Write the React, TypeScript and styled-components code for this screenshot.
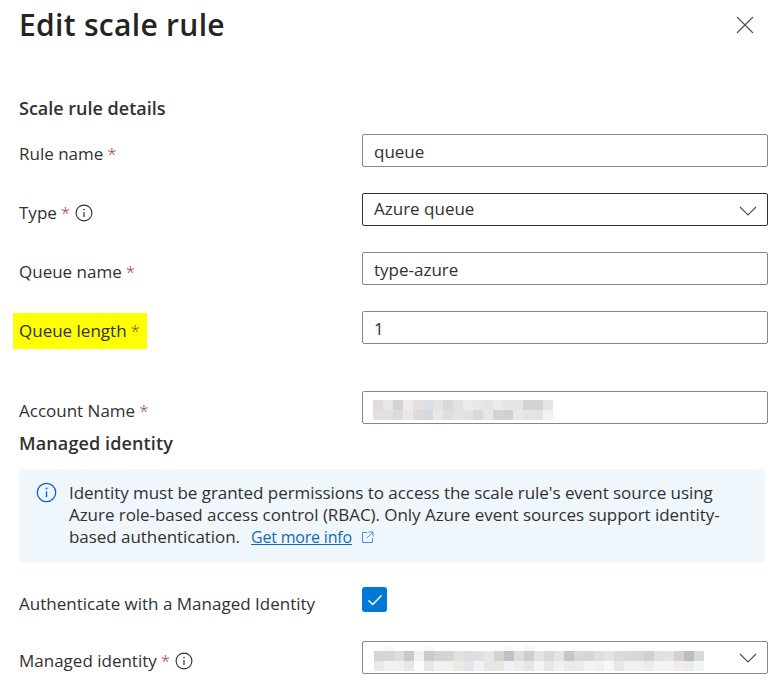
import React from "react";
import styled, { createGlobalStyle } from "styled-components";

const Global = createGlobalStyle`
  html, body { margin: 0; padding: 0; background: #fff; }
  body { font-family: "Open Sans", "Noto Sans", sans-serif; color: #323130; overflow: hidden; }
`;

const Page = styled.div`
  width: 780px;
  height: 689px;
  box-sizing: border-box;
  overflow: hidden;
  padding: 0 12px 0 19px;
  display: flex;
  flex-direction: column;
`;
const Header = styled.header`
  display: flex;
  justify-content: space-between;
  align-items: center;
  height: 50px;
`;
const Title = styled.h1`
  margin: 0;
  font-size: 30px;
  line-height: 50px;
  font-weight: 600;
  letter-spacing: 0.3px;
  color: #252423;
`;
const Close = styled.button`
  border: 0;
  background: none;
  padding: 0;
  width: 18px;
  height: 18px;
  margin-right: 14px;
  display: flex;
  color: #505050;
  svg { width: 18px; height: 18px; }
`;
const SectionTitle = styled.h2<{ $top: number; $bottom: number; $tight?: boolean }>`
  margin: ${(p) => p.$top}px 0 ${(p) => p.$bottom}px;
  font-size: 18px;
  line-height: 22px;
  font-weight: 600;
  letter-spacing: ${(p) => (p.$tight ? "0.12px" : "0")};
  color: #323130;
`;
const Row = styled.div<{ $bottom: number; $height?: number }>`
  display: grid;
  grid-template-columns: 343px 406px;
  grid-template-rows: ${(p) => p.$height ?? 33}px;
  align-items: center;
  margin-bottom: ${(p) => p.$bottom}px;
`;
const Label = styled.label<{ $drop?: number }>`
  display: flex;
  align-items: center;
  padding-top: ${(p) => p.$drop ?? 6}px;
  font-size: 17px;
  line-height: 22px;
  color: #323130;
`;
const Highlight = styled.span`
  display: inline-block;
  background: #ffff00;
  margin: -7px 0 -7px -6px;
  padding: 7px 6px;
  width: 134px;
  box-sizing: border-box;
  white-space: nowrap;
  color: #323130;
`;
const Req = styled.span`
  color: #a4262c;
  margin-left: 4px;
  font-weight: 300;
`;
const Tip = styled.span`
  display: inline-flex;
  margin-left: 5px;
  color: #323130;
  svg { width: 18px; height: 18px; }
`;
const Chevron = styled.svg`
  width: 18px;
  height: 10px;
  color: #505050;
  flex: none;
`;
const Field = styled.div<{ $active?: boolean }>`
  height: 33px;
  box-sizing: border-box;
  border: 1px solid ${(p) => (p.$active ? "#323130" : "#8a8886")};
  border-radius: 2px;
  padding: ${(p) => (p.$active ? "0 10px 2px 11px" : "1px 10px 0 11px")};
  display: flex;
  align-items: center;
  justify-content: space-between;
  font-size: 17px;
  color: #323130;
  background: #fff;
  ${Chevron} { margin-top: ${(p) => (p.$active ? "4px" : "0")}; }
`;
const Banner = styled.div`
  width: 746px;
  height: 93px;
  box-sizing: border-box;
  background: #eff6fc;
  padding: 13px 30px 0 17px;
  display: flex;
  gap: 12px;
  margin-bottom: 25px;
`;
const BannerIcon = styled.span`
  color: #0f62d6;
  flex: none;
  display: flex;
  svg { width: 21px; height: 21px; }
`;
const BannerText = styled.p`
  margin: 0;
  font-size: 17px;
  line-height: 22px;
  letter-spacing: -0.05px;
  color: #323130;
`;
const InfoLink = styled.a`
  color: #0f6cbd;
  text-decoration: underline;
  font-size: 16px;
  letter-spacing: -0.2px;
  margin-left: 11px;
`;
const External = styled.svg`
  width: 13px;
  height: 13px;
  margin-left: 9px;
  vertical-align: -1px;
  color: #4a90d9;
`;
const Check = styled.span`
  width: 25px;
  height: 25px;
  border-radius: 3px;
  background: #0078d4;
  display: flex;
  align-items: center;
  justify-content: center;
  color: #fff;
  svg { width: 16px; height: 12px; }
`;
const Redacted = styled.svg<{ $left: number; $top: number }>`
  display: block;
  flex: none;
  margin: ${(p) => p.$top}px 0 0 ${(p) => p.$left}px;
`;

const accountCells = [
  ["#e0dadb","#e6e7e8","#d4d2d4","#ecebeb","#e6e1db","#dcdfe8","#e4e4e3","#dbd7d7","#e0e1e6","#ebebea","#e8e8e7","#e4e4e3","#ebebeb","#e6e6e4","#e3e6e3","#d3d2d3","#d3d2d3","#e3e5e2"],
  ["#e8e0e0","#e0e2e6","#dcdcdc","#ebe7e2","#dcdbda","#d9d9dd","#e8e8e8","#e3dddd","#e3e3e2","#e2e2e2","#d9d9d9","#e8e8e6","#d4d3d4","#d2d1d2","#e6e9e6","#e4e4e3","#e4e4e3","#f2f2f1"],
];
const identityCells = [
  ["#d6d5d4","#d5d7d7","#dddedb","#c8c8ca","#f1f1f1","#cbcbce","#d4d3d1","#d6d5d5","#e2e1de","#dcdde2","#dfe0e3","#e6e6e6","#d5d3cd","#c4bfc6","#dcdde0","#cfcdd0","#e3e3e3","#d8d8d9","#e4e4e4","#c6c6c7","#d8d7d9","#d8d5d8","#e0e0e1","#e4e4e4","#dcdadd","#d8d8d8","#d8d7d5","#cfd0d4","#e0e0de","#e1e2e4","#d8cfc9","#bcbcbe","#d2dbd9"],
  ["#ebe8e9","#f0f1f2","#f2f0f0","#e8e8e8","#fafbfd","#e4e8e7","#f1f2f1","#f1f1ef","#ece9e3","#e2e5ec","#f1f2f4","#e8e8e4","#e6e7e3","#f0f0f2","#eeede9","#e6e6e6","#f4f5f6","#e9e6e8","#f0f1f0","#eaeaea","#ebebeb","#f3f4f4","#f1f1f1","#f8f8f8","#e9e6e8","#f2f1ef","#f1f0ee","#e9ebee","#f4f4f2","#f2f3f4","#eeedeb","#ebeaea","#f4f5f5"],
];

const Cells = ({ rows, left = 0, top = 0, halo = [] }: { rows: string[][]; left?: number; top?: number; halo?: number[] }) => {
  const w = rows[0].length * 10;
  const extra = halo.length ? 5 : 0;
  return (
    <Redacted $left={left} $top={top} width={w} height={20 + extra} viewBox={`0 ${-extra} ${w} ${20 + extra}`} shapeRendering="crispEdges">
      {halo.map((x) => <rect key={x} x={x * 10} y={-5} width={10} height={5} fill="#f8f8f8" />)}
      {rows.map((r, y) => r.map((c, x) => <rect key={`${x}-${y}`} x={x * 10} y={y * 10} width={10} height={10} fill={c} />))}
    </Redacted>
  );
};

const InfoCircle = () => (
  <svg viewBox="0 0 18 18" fill="none" stroke="currentColor" strokeWidth="1.1">
    <circle cx="9" cy="9" r="7.9" />
    <path d="M9 8v5" strokeWidth="1.2" />
    <circle cx="9" cy="5.6" r="0.8" fill="currentColor" stroke="none" />
  </svg>
);
const Down = () => (
  <Chevron viewBox="0 0 18 10" fill="none" stroke="currentColor" strokeWidth="1.1">
    <path d="M1 1l8 8 8-8" />
  </Chevron>
);

export default function App() {
  return (
    <Page>
      <Global />
      <Header>
        <Title>Edit scale rule</Title>
        <Close aria-label="Close">
          <svg viewBox="0 0 18 18" fill="none" stroke="currentColor" strokeWidth="1.1">
            <path d="M1 1l16 16M17 1L1 17" />
          </svg>
        </Close>
      </Header>
      <SectionTitle $top={47} $bottom={15}>Scale rule details</SectionTitle>
      <Row $bottom={26}>
        <Label>Rule name<Req>*</Req></Label>
        <Field>queue</Field>
      </Row>
      <Row $bottom={26}>
        <Label>Type<Req>*</Req><Tip><InfoCircle /></Tip></Label>
        <Field $active>Azure queue<Down /></Field>
      </Row>
      <Row $bottom={26}>
        <Label>Queue name<Req>*</Req></Label>
        <Field>type-azure</Field>
      </Row>
      <Row $bottom={47}>
        <Label><Highlight>Queue length<Req>*</Req></Highlight></Label>
        <Field>1</Field>
      </Row>
      <Row $bottom={0}>
        <Label>Account Name<Req>*</Req></Label>
        <Field><Cells rows={accountCells} left={-1} top={4} /></Field>
      </Row>
      <SectionTitle $top={8} $bottom={15} $tight>Managed identity</SectionTitle>
      <Banner>
        <BannerIcon><InfoCircle /></BannerIcon>
        <BannerText>
          Identity must be granted permissions to access the scale rule's event source using Azure role-based access control (RBAC). Only Azure event sources support identity-based authentication.
          <InfoLink href="#">Get more info</InfoLink>
          <External viewBox="0 0 13 13" fill="none" stroke="currentColor" strokeWidth="1">
            <path d="M6 1.5H1.5v10h10V7M7.5 1h4.5v4.5M12 1L6 7" />
          </External>
        </BannerText>
      </Banner>
      <Row $bottom={29} $height={25}>
        <Label $drop={9}>Authenticate with a Managed Identity</Label>
        <Check>
          <svg viewBox="0 0 16 12" fill="none" stroke="currentColor" strokeWidth="1.5"><path d="M1.5 6.5l4.2 4L14.5 1.5" /></svg>
        </Check>
      </Row>
      <Row $bottom={0}>
        <Label>Managed identity<Req>*</Req><Tip><InfoCircle /></Tip></Label>
        <Field><Cells rows={identityCells} halo={[1, 5, 13, 15]} /><Down /></Field>
      </Row>
    </Page>
  );
}
